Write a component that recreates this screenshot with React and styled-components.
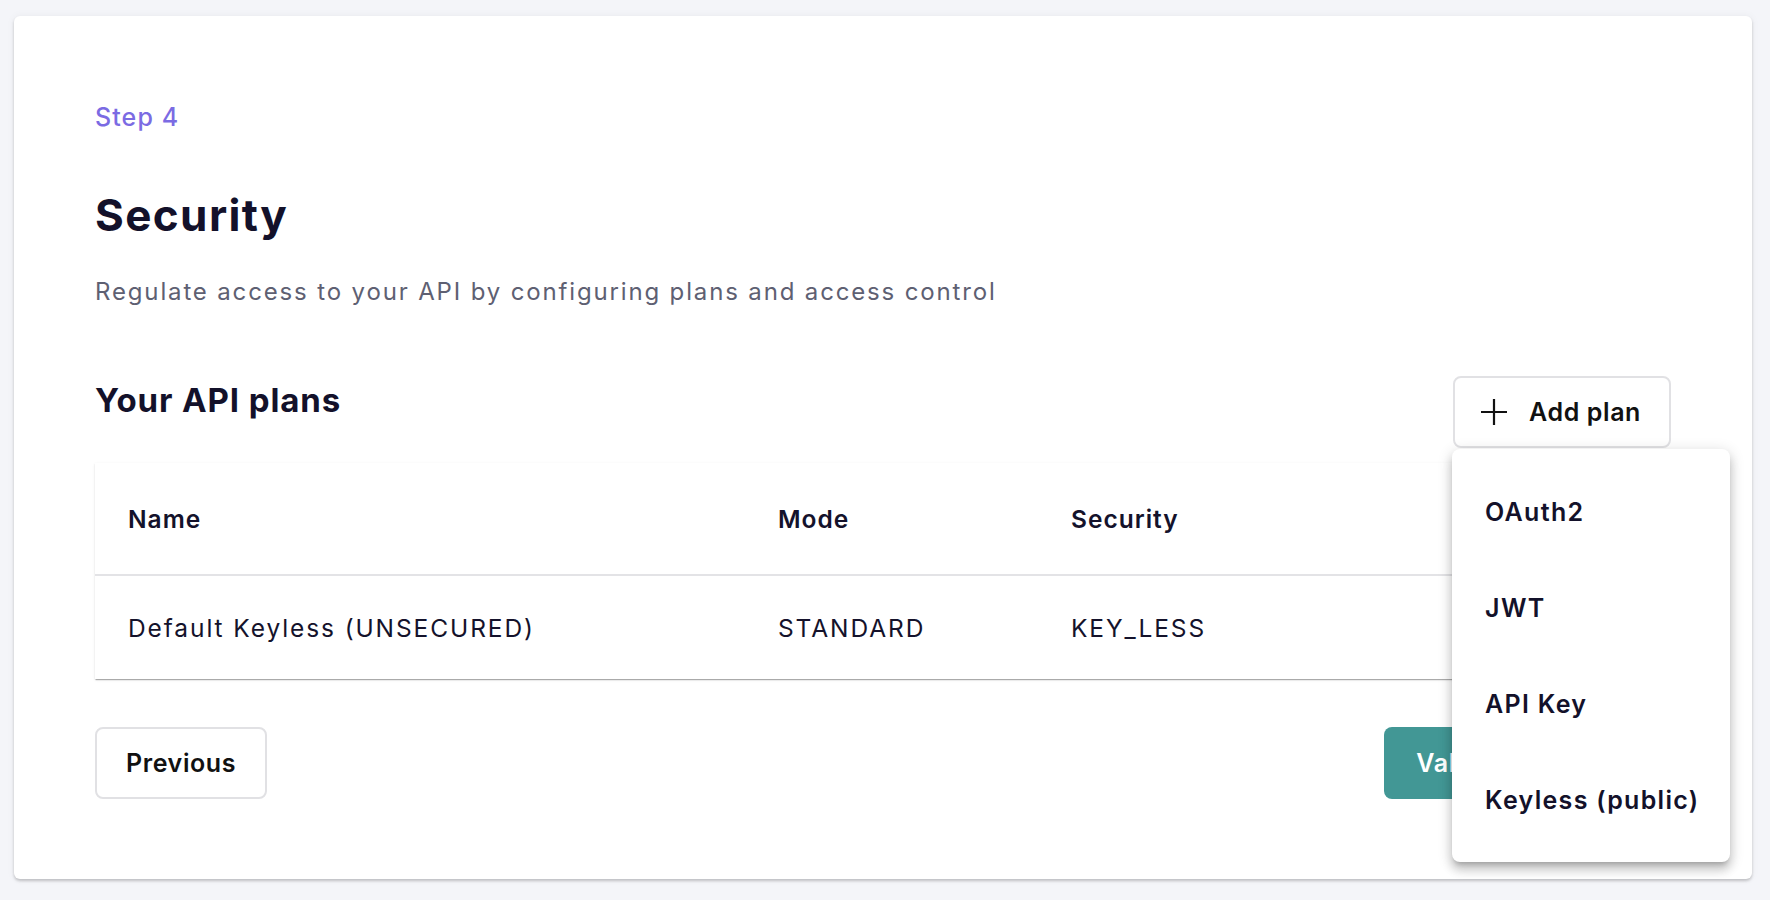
import React from "react";
import styled, { createGlobalStyle } from "styled-components";

const GlobalStyle = createGlobalStyle`
  html, body {
    margin: 0;
    padding: 0;
    background: #f4f5f9;
  }
  body {
    font-family: Inter, "Noto Sans", Roboto, sans-serif;
    color: #14122b;
  }
  * { box-sizing: border-box; }
`;

const Page = styled.div`
  padding: 16px 18px 20px 14px;
`;

const Card = styled.section`
  background: #ffffff;
  border-radius: 6px;
  box-shadow: 0 2px 3px rgba(0, 0, 0, 0.2), 0 0 8px rgba(0, 0, 0, 0.05);
  padding: 89px 81px 80px 81px;
`;

const StepLabel = styled.div`
  font-size: 25px;
  line-height: 25px;
  font-weight: 500;
  letter-spacing: 1.1px;
  color: #7b6be3;
  margin: 0 0 63px;
`;

const Title = styled.h1`
  font-size: 44px;
  line-height: 44px;
  font-weight: 700;
  letter-spacing: 1.4px;
  color: #13112a;
  margin: 0 0 43px;
`;

const Subtitle = styled.p`
  font-size: 24px;
  line-height: 24px;
  font-weight: 400;
  letter-spacing: 1.85px;
  color: #5e6072;
  margin: 0 0 72px;
`;

const SectionHeader = styled.div`
  display: flex;
  justify-content: space-between;
  align-items: flex-start;
`;

const SectionTitle = styled.h2`
  font-size: 33px;
  line-height: 33px;
  font-weight: 700;
  letter-spacing: 0.9px;
  color: #13112a;
  margin: 8px 0 0;
`;

const MenuAnchor = styled.div`
  position: relative;
`;

const OutlineButton = styled.button`
  display: inline-flex;
  align-items: center;
  gap: ${(p) => (p.$withIcon ? "22px" : "0")};
  height: 72px;
  padding: 0 ${(p) => (p.$withIcon ? "28px 0 26px" : "29px")};
  background: #ffffff;
  border: 2px solid #e1e1e4;
  border-radius: 8px;
  font-family: inherit;
  font-size: 25px;
  font-weight: 600;
  letter-spacing: 0.6px;
  color: #111111;
  cursor: pointer;
`;

const PrimaryButton = styled.button`
  display: inline-flex;
  align-items: center;
  height: 72px;
  padding: 0 32px;
  background: #429795;
  border: none;
  border-radius: 8px;
  font-family: inherit;
  font-size: 25px;
  font-weight: 600;
  letter-spacing: 0.6px;
  color: #ffffff;
  cursor: pointer;
`;

const Menu = styled.ul`
  position: absolute;
  top: calc(100% + 1px);
  left: -1px;
  width: 278px;
  margin: 0;
  padding: 15px 0 14px;
  list-style: none;
  background: #ffffff;
  border-radius: 8px;
  box-shadow: 0 5px 5px -3px rgba(0, 0, 0, 0.2),
    0 8px 10px 1px rgba(0, 0, 0, 0.14), 0 3px 14px 2px rgba(0, 0, 0, 0.12);
  z-index: 10;
`;

const MenuItem = styled.li`
  height: 96px;
  display: flex;
  align-items: center;
  padding: 0 33px;
  font-size: 25px;
  font-weight: 600;
  letter-spacing: 1.3px;
  color: #13112a;
  white-space: nowrap;
  cursor: pointer;
`;

const Table = styled.div`
  margin-top: 15px;
  background: #ffffff;
  box-shadow: 0 2px 1px -1px rgba(0, 0, 0, 0.2), 0 1px 1px 0 rgba(0, 0, 0, 0.12),
    0 1px 3px 0 rgba(0, 0, 0, 0.08);
`;

const Row = styled.div`
  display: grid;
  grid-template-columns: 650px 293px 1fr;
  align-items: center;
  padding-left: 33px;
  height: ${(p) => (p.$head ? "113px" : "103px")};
  border-bottom: ${(p) => (p.$head ? "2px solid #e3e3e6" : "none")};
`;

const Cell = styled.div`
  font-size: 24.5px;
  font-weight: ${(p) => (p.$head ? 600 : 400)};
  letter-spacing: ${(p) => (p.$head ? "1px" : "1.9px")};
  color: #14122b;
  white-space: nowrap;
`;

const Footer = styled.div`
  margin-top: 48px;
  display: flex;
  justify-content: space-between;
  align-items: center;
`;

const PlusIcon = () => (
  <svg width="26" height="26" viewBox="0 0 26 26" aria-hidden="true">
    <path d="M13 0v26M0 13h26" stroke="#111" strokeWidth="2.2" fill="none" />
  </svg>
);

const columns = ["Name", "Mode", "Security"];
const plans = [["Default Keyless (UNSECURED)", "STANDARD", "KEY_LESS"]];
const menuOptions = ["OAuth2", "JWT", "API Key", "Keyless (public)"];

export default function App() {
  return (
    <>
      <GlobalStyle />
      <Page>
        <Card>
          <StepLabel>Step 4</StepLabel>
          <Title>Security</Title>
          <Subtitle>
            Regulate access to your API by configuring plans and access control
          </Subtitle>
          <SectionHeader>
            <SectionTitle>Your API plans</SectionTitle>
            <MenuAnchor>
              <OutlineButton $withIcon>
                <PlusIcon />
                Add plan
              </OutlineButton>
              <Menu>
                {menuOptions.map((o) => (
                  <MenuItem key={o}>{o}</MenuItem>
                ))}
              </Menu>
            </MenuAnchor>
          </SectionHeader>
          <Table>
            <Row $head>
              {columns.map((c) => (
                <Cell key={c} $head>
                  {c}
                </Cell>
              ))}
            </Row>
            {plans.map((p) => (
              <Row key={p[0]}>
                {p.map((v) => (
                  <Cell key={v}>{v}</Cell>
                ))}
              </Row>
            ))}
          </Table>
          <Footer>
            <OutlineButton>Previous</OutlineButton>
            <PrimaryButton>Validate my plans</PrimaryButton>
          </Footer>
        </Card>
      </Page>
    </>
  );
}
